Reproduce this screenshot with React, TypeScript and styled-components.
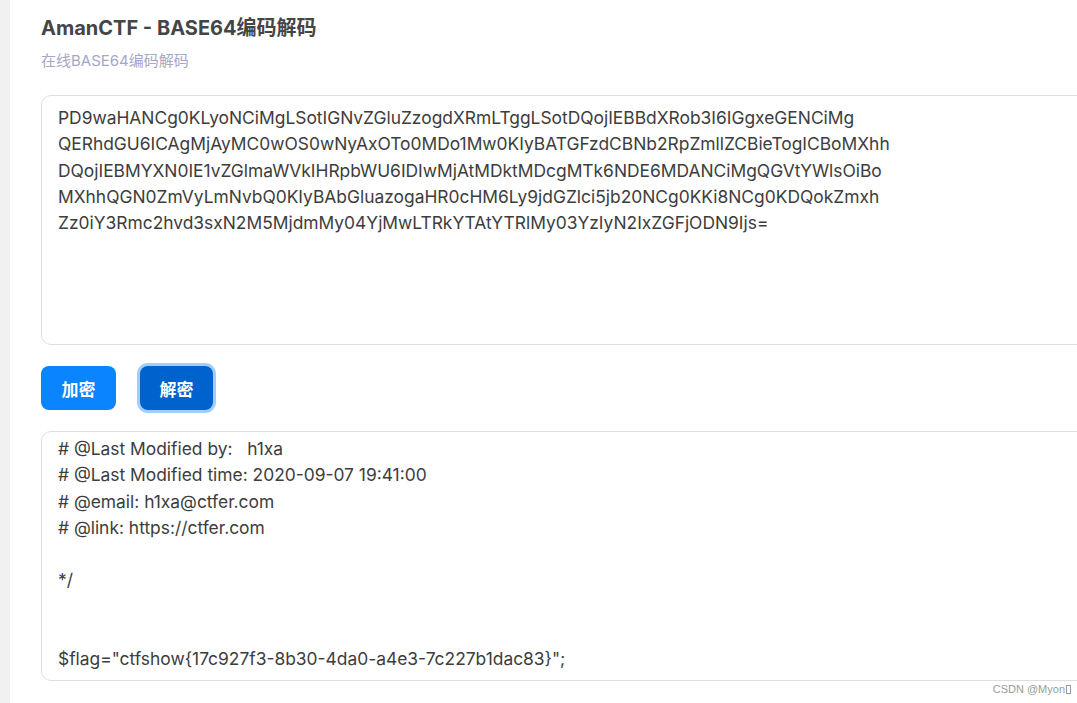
import React from "react";
import styled, { createGlobalStyle } from "styled-components";

const GlobalStyle = createGlobalStyle`
  html, body {
    margin: 0;
    padding: 0;
    background: #fff;
    overflow: hidden;
  }
  body {
    font-family: Inter, "Noto Sans CJK SC", sans-serif;
    color: #333;
  }
`;

const Page = styled.div`
  display: flex;
  width: 1077px;
  height: 703px;
  position: relative;
  overflow: hidden;
`;

const SideStrip = styled.div`
  width: 10px;
  flex-shrink: 0;
  background: #f0f1f3;
`;

const Main = styled.div`
  flex: 1;
  padding: 15px 0 0 31px;
  display: flex;
  flex-direction: column;
`;

const Title = styled.h1`
  margin: 0;
  font-size: 20px;
  font-weight: 700;
  color: #454545;
  line-height: 26px;
`;

const Subtitle = styled.div`
  margin-top: 10px;
  font-size: 15px;
  color: #a4a7c6;
  line-height: 20px;
`;

const Box = styled.div<{ $top: number; $padTop: number }>`
  margin-top: ${(p) => p.$top}px;
  width: 1080px;
  height: 250px;
  box-sizing: border-box;
  border: 1px solid #dedede;
  border-radius: 10px;
  padding: ${(p) => p.$padTop}px 16px 0 16px;
  font-size: 17.4px;
  line-height: 26.3px;
  color: #3d3d3d;
  white-space: pre;
  overflow: hidden;
`;

const ButtonRow = styled.div`
  display: flex;
  gap: 24px;
  margin-top: 21px;
  align-items: center;
`;

const Button = styled.button<{ $focused?: boolean }>`
  font-family: "Noto Sans CJK SC", sans-serif;
  font-size: 17px;
  font-weight: 700;
  color: #fff;
  border: none;
  border-radius: 8px;
  height: 44px;
  width: ${(p) => (p.$focused ? "73px" : "75px")};
  padding: 0;
  background: ${(p) => (p.$focused ? "#0062cc" : "#0a84ff")};
  box-shadow: ${(p) => (p.$focused ? "0 0 0 3px #9fcdfc" : "none")};
  cursor: pointer;
`;

const Watermark = styled.div`
  position: absolute;
  right: 6px;
  bottom: 8px;
  font-size: 11px;
  color: #9a9a9a;
  font-family: "Liberation Sans", sans-serif;
`;

const Tofu = styled.span`
  display: inline-block;
  width: 5px;
  height: 9px;
  border: 1px solid #9a9a9a;
  box-sizing: border-box;
  margin-left: 1px;
  vertical-align: -1px;
`;

const encoded = `PD9waHANCg0KLyoNCiMgLSotIGNvZGluZzogdXRmLTggLSotDQojIEBBdXRob3I6IGgxeGENCiMg
QERhdGU6ICAgMjAyMC0wOS0wNyAxOTo0MDo1Mw0KIyBATGFzdCBNb2RpZmllZCBieTogICBoMXhh
DQojIEBMYXN0IE1vZGlmaWVkIHRpbWU6IDIwMjAtMDktMDcgMTk6NDE6MDANCiMgQGVtYWlsOiBo
MXhhQGN0ZmVyLmNvbQ0KIyBAbGluazogaHR0cHM6Ly9jdGZlci5jb20NCg0KKi8NCg0KDQokZmxh
Zz0iY3Rmc2hvd3sxN2M5MjdmMy04YjMwLTRkYTAtYTRlMy03YzIyN2IxZGFjODN9Ijs=`;

const decoded = `# @Last Modified by:   h1xa
# @Last Modified time: 2020-09-07 19:41:00
# @email: h1xa@ctfer.com
# @link: https://ctfer.com

*/


$flag="ctfshow{17c927f3-8b30-4da0-a4e3-7c227b1dac83}";`;

export default function App() {
  return (
    <Page>
      <GlobalStyle />
      <SideStrip />
      <Main>
        <Title>AmanCTF - BASE64编码解码</Title>
        <Subtitle>在线BASE64编码解码</Subtitle>
        <Box $top={24} $padTop={9}>{encoded}</Box>
        <ButtonRow>
          <Button>加密</Button>
          <Button $focused>解密</Button>
        </ButtonRow>
        <Box $top={21} $padTop={4}>{decoded}</Box>
      </Main>
      <Watermark>
        CSDN @Myon<Tofu />
      </Watermark>
    </Page>
  );
}
